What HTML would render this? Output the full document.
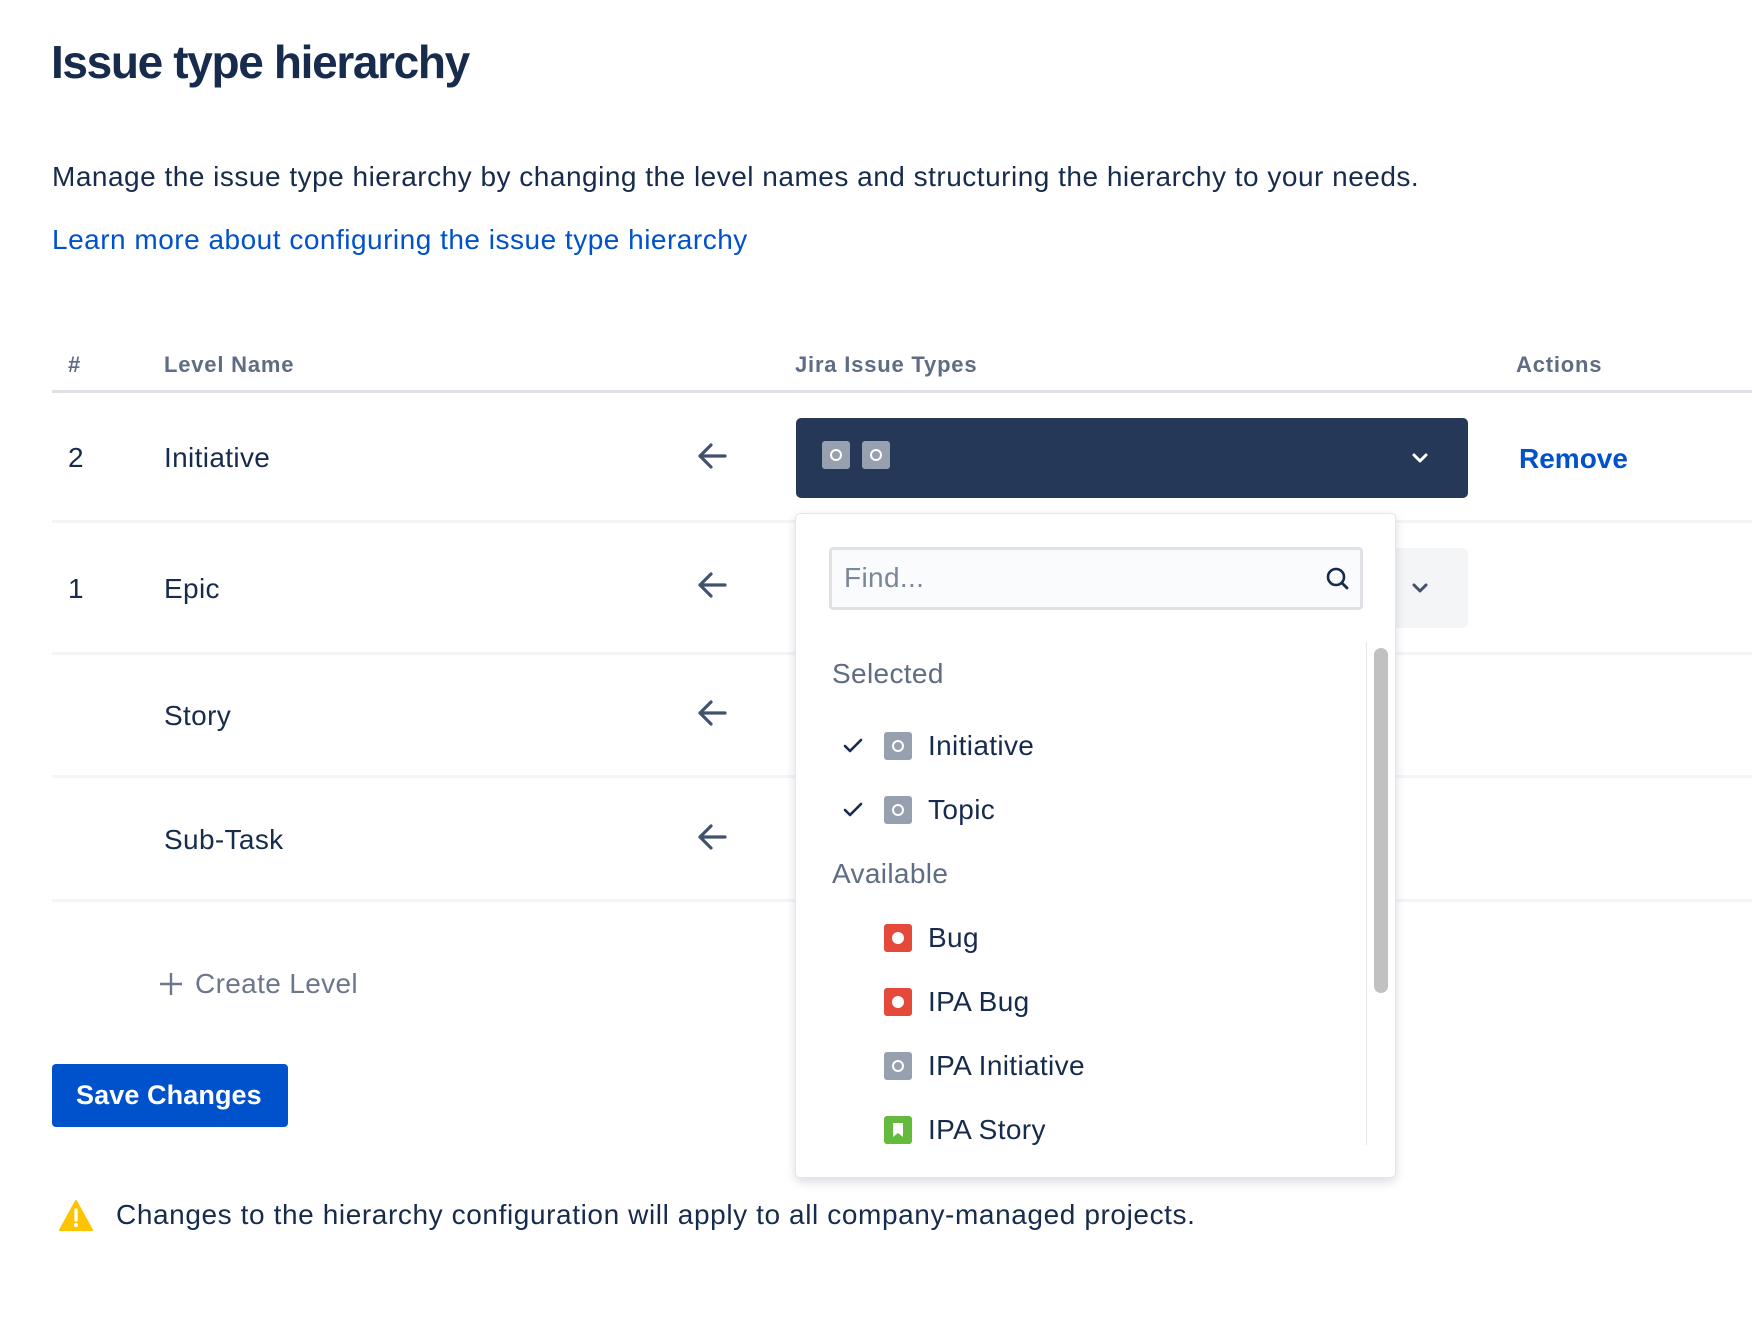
<!DOCTYPE html>
<html><head><meta charset="utf-8"><style>
*{margin:0;padding:0;box-sizing:border-box}
body{width:1752px;height:1326px;background:#fff;font-family:"Liberation Sans",sans-serif;color:#172b4d;position:relative;overflow:hidden}
.t{position:absolute;line-height:1;white-space:nowrap;letter-spacing:0.35px}
.h{font-size:22px;font-weight:bold;color:#5e6c84;letter-spacing:0.8px}
.line{position:absolute;left:52px;right:0;height:3px;background:#f4f5f7}
.ic{position:absolute;width:28px;height:28px;border-radius:3px}
.ic.g{background:#97a0af}.ic.r{background:#e5493a}.ic.gr{background:#63ba3c}
.ic.g::after{content:"";position:absolute;left:8px;top:8px;width:12px;height:12px;border:2.5px solid #fff;border-radius:50%;box-sizing:border-box}
.ic.r::after{content:"";position:absolute;left:8px;top:8px;width:12px;height:12px;background:#fff;border-radius:50%}
</style></head><body>
<div class="t" style="left:51px;top:39px;font-size:46px;font-weight:bold;letter-spacing:-1.35px">Issue type hierarchy</div>
<div class="t" style="left:52px;top:163px;font-size:28px;letter-spacing:0.5px">Manage the issue type hierarchy by changing the level names and structuring the hierarchy to your needs.</div>
<div class="t" style="left:52px;top:226px;font-size:28px;color:#0052cc;letter-spacing:0.5px">Learn more about configuring the issue type hierarchy</div>

<div class="t h" style="left:68px;top:354px">#</div>
<div class="t h" style="left:164px;top:354px">Level Name</div>
<div class="t h" style="left:795px;top:354px">Jira Issue Types</div>
<div class="t h" style="left:1516px;top:354px">Actions</div>
<div class="line" style="top:390px;background:#dfe1e6"></div>

<div class="line" style="top:520px"></div>
<div class="line" style="top:652px"></div>
<div class="line" style="top:775px"></div>
<div class="line" style="top:899px"></div>

<div class="t" style="left:68px;top:444px;font-size:28px">2</div>
<div class="t" style="left:164px;top:444px;font-size:28px">Initiative</div>
<div class="t" style="left:68px;top:575px;font-size:28px">1</div>
<div class="t" style="left:164px;top:575px;font-size:28px">Epic</div>
<div class="t" style="left:164px;top:702px;font-size:28px">Story</div>
<div class="t" style="left:164px;top:826px;font-size:28px">Sub-Task</div>

<svg style="position:absolute;left:696px;top:440px" width="32" height="32" viewBox="0 0 32 32"><path d="M29 16H4M15 5L4 16l11 11" fill="none" stroke="#42526e" stroke-width="3.2" stroke-linecap="round" stroke-linejoin="round"/></svg>
<svg style="position:absolute;left:696px;top:569px" width="32" height="32" viewBox="0 0 32 32"><path d="M29 16H4M15 5L4 16l11 11" fill="none" stroke="#42526e" stroke-width="3.2" stroke-linecap="round" stroke-linejoin="round"/></svg>
<svg style="position:absolute;left:696px;top:697px" width="32" height="32" viewBox="0 0 32 32"><path d="M29 16H4M15 5L4 16l11 11" fill="none" stroke="#42526e" stroke-width="3.2" stroke-linecap="round" stroke-linejoin="round"/></svg>
<svg style="position:absolute;left:696px;top:821px" width="32" height="32" viewBox="0 0 32 32"><path d="M29 16H4M15 5L4 16l11 11" fill="none" stroke="#42526e" stroke-width="3.2" stroke-linecap="round" stroke-linejoin="round"/></svg>

<div style="position:absolute;left:796px;top:418px;width:672px;height:80px;background:#253858;border-radius:5px"></div>
<div class="ic g" style="left:822px;top:441px"></div>
<div class="ic g" style="left:862px;top:441px"></div>
<svg style="position:absolute;left:1410px;top:450px" width="20" height="16" viewBox="0 0 20 16"><path d="M4 5l6 6 6-6" fill="none" stroke="#fff" stroke-width="3" stroke-linecap="round" stroke-linejoin="round"/></svg>
<div class="t" style="left:1519px;top:445px;font-size:28px;font-weight:bold;color:#0052cc;letter-spacing:0">Remove</div>

<div style="position:absolute;left:1380px;top:548px;width:88px;height:80px;background:#f4f5f7;border-radius:5px"></div>
<svg style="position:absolute;left:1410px;top:580px" width="20" height="16" viewBox="0 0 20 16"><path d="M4 5l6 6 6-6" fill="none" stroke="#42526e" stroke-width="3" stroke-linecap="round" stroke-linejoin="round"/></svg>

<div style="position:absolute;left:795px;top:513px;width:601px;height:665px;background:#fff;border:1px solid #e4e6ea;border-radius:5px;box-shadow:0 4px 10px rgba(9,30,66,.15)"></div>
<div style="position:absolute;left:829px;top:547px;width:534px;height:63px;background:#fafbfc;border:3px solid #dfe1e6;border-radius:4px"></div>
<div class="t" style="left:844px;top:564px;font-size:28px;color:#7a869a">Find...</div>
<svg style="position:absolute;left:1324px;top:565px" width="28" height="28" viewBox="0 0 28 28"><circle cx="12" cy="12" r="8" fill="none" stroke="#172b4d" stroke-width="2.6"/><path d="M18 18l5 5" stroke="#172b4d" stroke-width="2.8" stroke-linecap="round"/></svg>
<div style="position:absolute;left:1366px;top:642px;width:1px;height:503px;background:#e6e6e6"></div>
<div style="position:absolute;left:1374px;top:648px;width:14px;height:345px;background:#c1c1c1;border-radius:7px"></div>

<div class="t" style="left:832px;top:660px;font-size:28px;color:#5e6c84">Selected</div>
<svg style="position:absolute;left:842px;top:736px" width="22" height="20" viewBox="0 0 22 20"><path d="M3 10l5 5L19 4" fill="none" stroke="#172b4d" stroke-width="2.6" stroke-linecap="round" stroke-linejoin="round"/></svg>
<div class="ic g" style="left:884px;top:732px"></div>
<div class="t" style="left:928px;top:732px;font-size:28px">Initiative</div>
<svg style="position:absolute;left:842px;top:800px" width="22" height="20" viewBox="0 0 22 20"><path d="M3 10l5 5L19 4" fill="none" stroke="#172b4d" stroke-width="2.6" stroke-linecap="round" stroke-linejoin="round"/></svg>
<div class="ic g" style="left:884px;top:796px"></div>
<div class="t" style="left:928px;top:796px;font-size:28px">Topic</div>
<div class="t" style="left:832px;top:860px;font-size:28px;color:#5e6c84">Available</div>
<div class="ic r" style="left:884px;top:924px"></div>
<div class="t" style="left:928px;top:924px;font-size:28px">Bug</div>
<div class="ic r" style="left:884px;top:988px"></div>
<div class="t" style="left:928px;top:988px;font-size:28px">IPA Bug</div>
<div class="ic g" style="left:884px;top:1052px"></div>
<div class="t" style="left:928px;top:1052px;font-size:28px">IPA Initiative</div>
<div class="ic gr" style="left:884px;top:1116px"><svg width="28" height="28" viewBox="0 0 28 28" style="position:absolute;left:0;top:0"><path d="M9 7h10v14l-5-4-5 4z" fill="#fff"/></svg></div>
<div class="t" style="left:928px;top:1116px;font-size:28px">IPA Story</div>

<svg style="position:absolute;left:158px;top:971px" width="26" height="26" viewBox="0 0 26 26"><path d="M13 2v22M2 13h22" stroke="#6b778c" stroke-width="2.4"/></svg>
<div class="t" style="left:195px;top:970px;font-size:28px;color:#6b778c">Create Level</div>

<div style="position:absolute;left:52px;top:1064px;width:236px;height:63px;background:#0052cc;border-radius:4px"></div>
<div class="t" style="left:76px;top:1082px;font-size:27px;font-weight:bold;color:#fff;letter-spacing:0.1px">Save Changes</div>

<svg style="position:absolute;left:58px;top:1199px" width="36" height="33" viewBox="0 0 36 33"><path d="M18 2L34 31H2z" fill="#ffc400" stroke="#ffc400" stroke-width="2" stroke-linejoin="round"/><path d="M18 11v10" stroke="#fff" stroke-width="3.4" stroke-linecap="round"/><circle cx="18" cy="26" r="2" fill="#fff"/></svg>
<div class="t" style="left:116px;top:1201px;font-size:28px;letter-spacing:0.6px">Changes to the hierarchy configuration will apply to all company-managed projects.</div>
</body></html>
